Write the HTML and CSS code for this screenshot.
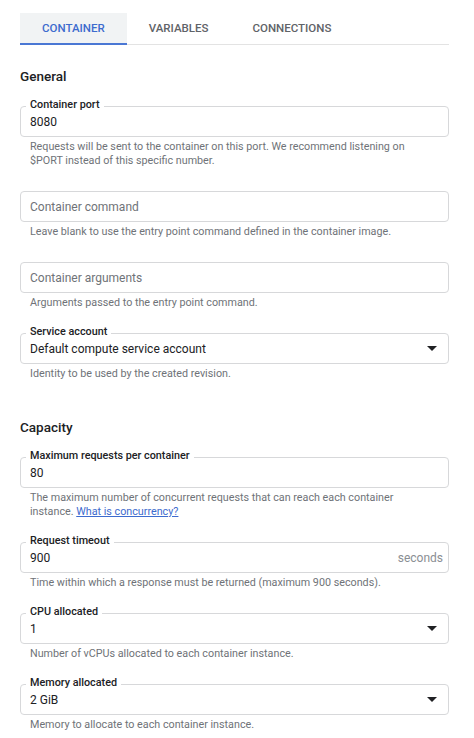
FILE: index.html
```html
<!DOCTYPE html>
<html lang="en">
<head>
  <meta charset="UTF-8">
  <meta name="viewport" content="width=device-width, initial-scale=1.0">
  <title>Container settings</title>
  <link rel="stylesheet" href="styles.css">
</head>
<body>
  <div class="page">
    <div class="tabs">
      <div class="tab tab-active">Container</div>
      <div class="tab">Variables</div>
      <div class="tab">Connections</div>
    </div>

    <div class="section">
      <h2 class="section-title">General</h2>

      <div class="field">
        <div class="field-box">
          <span class="field-label">Container port</span>
          <span class="field-value">8080</span>
        </div>
        <p class="field-hint">Requests will be sent to the container on this port. We recommend listening on $PORT instead of this specific number.</p>
      </div>

      <div class="field">
        <div class="field-box">
          <span class="field-placeholder">Container command</span>
        </div>
        <p class="field-hint">Leave blank to use the entry point command defined in the container image.</p>
      </div>

      <div class="field">
        <div class="field-box">
          <span class="field-placeholder">Container arguments</span>
        </div>
        <p class="field-hint">Arguments passed to the entry point command.</p>
      </div>

      <div class="field">
        <div class="field-box">
          <span class="field-label">Service account</span>
          <span class="field-value">Default compute service account</span>
          <span class="select-arrow"></span>
        </div>
        <p class="field-hint">Identity to be used by the created revision.</p>
      </div>
    </div>

    <div class="section">
      <h2 class="section-title">Capacity</h2>

      <div class="field">
        <div class="field-box">
          <span class="field-label">Maximum requests per container</span>
          <span class="field-value">80</span>
        </div>
        <p class="field-hint">The maximum number of concurrent requests that can reach each container instance. <a href="#" class="hint-link">What is concurrency?</a></p>
      </div>

      <div class="field">
        <div class="field-box">
          <span class="field-label">Request timeout</span>
          <span class="field-value">900</span>
          <span class="field-suffix">seconds</span>
        </div>
        <p class="field-hint">Time within which a response must be returned (maximum 900 seconds).</p>
      </div>

      <div class="field">
        <div class="field-box">
          <span class="field-label">CPU allocated</span>
          <span class="field-value">1</span>
          <span class="select-arrow"></span>
        </div>
        <p class="field-hint">Number of vCPUs allocated to each container instance.</p>
      </div>

      <div class="field">
        <div class="field-box">
          <span class="field-label">Memory allocated</span>
          <span class="field-value">2 GiB</span>
          <span class="select-arrow"></span>
        </div>
        <p class="field-hint">Memory to allocate to each container instance.</p>
      </div>
    </div>
  </div>
</body>
</html>
```

FILE: styles.css
```css
* {
  margin: 0;
  padding: 0;
  box-sizing: border-box;
}

body {
  font-family: Roboto, 'Liberation Sans', Arial, sans-serif;
  background: #ffffff;
  color: #202124;
}

.page {
  width: 429px;
  margin-left: 20px;
  padding-top: 13px;
}

.tabs {
  display: flex;
  border-bottom: 1px solid #e3e3e3;
  margin-bottom: 21px;
}

.tab {
  height: 32px;
  line-height: 30px;
  padding: 0 22px;
  font-size: 11.5px;
  font-weight: 500;
  text-transform: uppercase;
  color: #5f6368;
  border-bottom: 2px solid transparent;
  margin-bottom: -1px;
}

.tab-active {
  background: #f1f3f4;
  color: #3d6bce;
  border-bottom-color: #4a77d4;
}

.section + .section {
  margin-top: 36px;
}

.section-title {
  font-size: 13.5px;
  font-weight: 500;
  line-height: 20px;
  margin-bottom: 20px;
  color: #202124;
}

.field {
  margin-bottom: 23px;
}

.field-box {
  position: relative;
  display: flex;
  align-items: center;
  height: 31px;
  padding: 0 9px;
  border: 1px solid #d7d8da;
  border-radius: 4px;
}

.field-label {
  position: absolute;
  left: 5px;
  top: -9px;
  padding: 0 4px;
  background: #ffffff;
  font-size: 10.8px;
  font-weight: 500;
  line-height: 14px;
  color: #202124;
}

.field-value {
  flex: 1;
  font-size: 12px;
  color: #202124;
}

.field-placeholder {
  flex: 1;
  font-size: 12px;
  color: #6f7378;
}

.field-suffix {
  font-size: 12px;
  color: #8a8e93;
  margin-right: -4px;
}

.select-arrow {
  width: 0;
  height: 0;
  border-left: 5px solid transparent;
  border-right: 5px solid transparent;
  border-top: 5px solid #202124;
  margin-right: 2px;
}

.field-hint {
  margin-top: 3px;
  padding-left: 10px;
  padding-right: 20px;
  font-size: 10.75px;
  line-height: 14px;
  color: #6f7378;
}

.hint-link {
  color: #3d6bce;
  text-decoration: underline;
}
```
